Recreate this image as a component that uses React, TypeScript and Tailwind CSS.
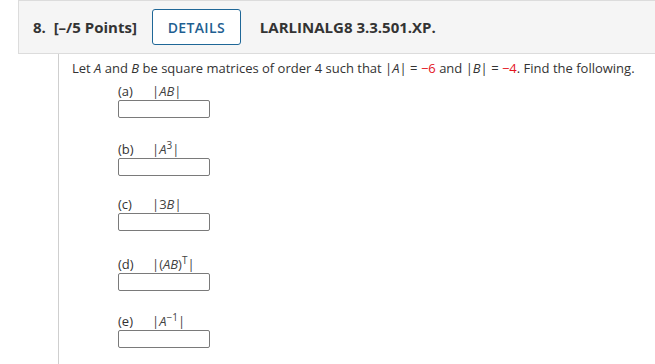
const parts = [
  { key: 'a', mt: 'mt-[0px]', expr: <><i>AB</i></> },
  { key: 'b', mt: 'mt-[23px]', expr: <><i>A</i><sup className="text-[10px] leading-none">3</sup></> },
  { key: 'c', mt: 'mt-[20px]', expr: <>3<i>B</i></> },
  { key: 'd', mt: 'mt-[25px]', expr: <>(<i>AB</i>)<sup className="text-[10px] leading-none">T</sup></> },
  { key: 'e', mt: 'mt-[22px]', expr: <><i>A</i><sup className="text-[10px] leading-none">−1</sup></> },
]

export default function App() {
  return (
    <div className="h-[364px] w-[655px] overflow-hidden bg-white font-['Open_Sans',sans-serif] text-[#333]">
      <div className="ml-[18px] flex h-[54px] w-[660px] items-center border border-[#dcdcdc] bg-[#f5f5f5] pl-[14px]">
        <span className="text-[15px] font-bold">8.&nbsp; [–/5 Points]</span>
        <button className="ml-[15px] h-[36px] w-[89px] rounded-[3px] border border-[#1f6797] bg-white text-[14px] font-semibold tracking-wide text-[#1f5f91]">
          DETAILS
        </button>
        <span className="ml-[19px] text-[15px] font-bold">LARLINALG8 3.3.501.XP.</span>
      </div>
      <div className="ml-[58px] h-[310px] border-l border-[#cfcfcf] pl-[13px] pt-[4px]">
        <p className="text-[13px] leading-[20px]">
          Let <i>A</i> and <i>B</i> be square matrices of order 4 such that |<i>A</i>| = <span className="text-[#e4141e]">−6</span> and |<i>B</i>| = <span className="text-[#e4141e]">−4</span>. Find the following.
        </p>
        <div className="ml-[46px] flex flex-col pt-[5px]">
          {parts.map((p) => (
            <div key={p.key} className={`flex flex-col ${p.mt}`}>
              <div className="flex h-[16px] items-end text-[13px] leading-[16px]">
                <span className="w-[34px]">({p.key})</span>
                <span className="text-[#444]">|{p.expr}|</span>
              </div>
              <input className="mt-[1px] h-[18px] w-[92px] rounded-[2px] border border-[#7a7a7a] bg-white" />
            </div>
          ))}
        </div>
      </div>
    </div>
  )
}
